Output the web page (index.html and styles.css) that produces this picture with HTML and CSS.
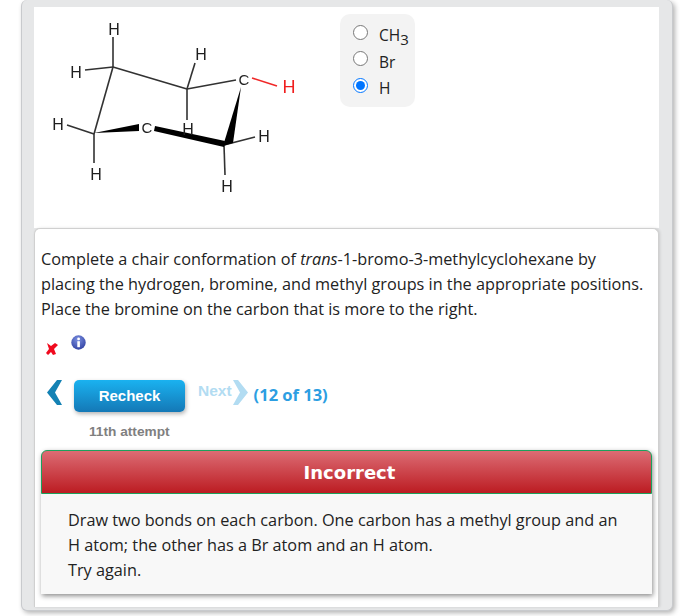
FILE: index.html
```html
<!DOCTYPE html>
<html>
  <head>
    <meta charset="UTF-8">
    <title>Chair conformation</title>
    <link rel="stylesheet" href="styles.css">
  </head>
  <body>
    <div class="frame">
      <div class="stage">
        <svg class="molecule" width="306" height="221" viewBox="34 7 306 221">
          <g class="bonds">
            <line x1="113" y1="67" x2="113" y2="37"/>
            <line x1="113" y1="67" x2="85" y2="70"/>
            <line x1="113" y1="67" x2="94" y2="134"/>
            <line x1="113" y1="67" x2="187" y2="89"/>
            <line x1="187" y1="89" x2="195" y2="63"/>
            <line x1="187" y1="89" x2="236" y2="80"/>
            <line x1="187" y1="89" x2="187" y2="120"/>
            <line x1="224" y1="145" x2="255" y2="137"/>
            <line x1="224" y1="145" x2="225" y2="175"/>
            <line x1="94" y1="134" x2="67" y2="125"/>
            <line x1="94" y1="134" x2="94" y2="163"/>
            <line class="red" x1="252" y1="78" x2="277" y2="86"/>
          </g>
          <polygon points="241,87 233,143 223,146"/>
          <polygon points="155,126 225,141 224,147 154,131"/>
          <polygon points="94,133 139,124 139,131"/>
          <g class="atoms">
            <text x="114" y="35">H</text>
            <text x="76" y="78">H</text>
            <text x="201" y="60">H</text>
            <text class="small" x="244" y="85">C</text>
            <text class="red" x="289" y="93">H</text>
            <text x="58" y="130">H</text>
            <text class="small" x="147" y="133">C</text>
            <text x="188" y="135">H</text>
            <text x="264" y="142">H</text>
            <text x="96" y="180">H</text>
            <text x="227" y="192">H</text>
          </g>
        </svg>
        <form class="choices">
          <label class="choice"><input type="radio" name="group"><span>CH<sub>3</sub></span></label>
          <label class="choice"><input type="radio" name="group"><span>Br</span></label>
          <label class="choice"><input type="radio" name="group" checked><span>H</span></label>
        </form>
      </div>
      <div class="card">
        <p class="question">Complete a chair conformation of <em>trans</em>-1-bromo-3-methylcyclohexane by placing the hydrogen, bromine, and methyl groups in the appropriate positions. Place the bromine on the carbon that is more to the right.</p>
        <div class="marks">
          <svg class="cross" width="14" height="14" viewBox="0 0 14 14"><path d="M2 1 L6 4 L10 1 L13 3 L9 7 L11 12 L8 13 L6 10 L3 13 L1 11 L4 7 Z"/></svg>
          <svg class="info" width="15" height="15" viewBox="0 0 15 15">
            <defs>
              <radialGradient id="ball" cx="0.45" cy="0.3" r="0.8">
                <stop offset="0" stop-color="#7a8fe0"/>
                <stop offset="1" stop-color="#2a3a9c"/>
              </radialGradient>
            </defs>
            <circle cx="7.5" cy="7.5" r="7.2" fill="url(#ball)"/>
            <rect x="6.3" y="6.2" width="2.6" height="6" fill="#fff"/>
            <circle cx="7.6" cy="3.9" r="1.4" fill="#fff"/>
          </svg>
        </div>
        <div class="controls">
          <svg class="prev" width="15" height="25" viewBox="0 0 15 25"><path d="M10 0 H15 L8 12.5 L15 25 H10 L0 12.5 Z"/></svg>
          <button type="button" class="recheck">Recheck</button>
          <span class="next">Next</span>
          <svg class="next-arrow" width="15" height="25" viewBox="0 0 15 25"><path d="M5 0 H0 L7 12.5 L0 25 H5 L15 12.5 Z"/></svg>
          <span class="count">(12 of 13)</span>
        </div>
        <div class="attempt">11th attempt</div>
        <div class="feedback">
          <div class="feedback-head">Incorrect</div>
          <div class="feedback-body">
            Draw two bonds on each carbon. One carbon has a methyl group and an<br>
            H atom; the other has a Br atom and an H atom.<br>
            Try again.
          </div>
        </div>
      </div>
    </div>
  </body>
</html>
```

FILE: styles.css
```css
* {
  box-sizing: border-box;
}
html {
  background-color: white;
}
body {
  min-height: 616px;
  margin: 0;
  font-family: "Open Sans", sans-serif;
  color: rgb(34, 34, 34);
}
.frame {
  width: 652px;
  height: 611px;
  margin-left: 21px;
  padding: 7px 13px 3px 12px;
  background-color: rgb(230, 231, 232);
  border: 1px solid rgb(200, 202, 205);
  border-top: 0;
  border-radius: 6px;
  box-shadow: 2px 2px 5px rgba(0, 0, 0, 0.3);
}
.stage {
  display: flex;
  align-items: flex-start;
  height: 221px;
  background-color: white;
}
.molecule {
  flex: none;
  filter: blur(0.4px);
}
.bonds line {
  stroke: rgb(50, 50, 50);
  stroke-width: 1.6;
}
.bonds line.red {
  stroke: rgb(240, 40, 40);
}
.atoms text {
  font-family: "Liberation Sans", sans-serif;
  font-size: 16px;
  text-anchor: middle;
  fill: rgb(30, 30, 30);
}
.atoms text.small {
  font-size: 15px;
}
.atoms text.red {
  font-size: 18px;
  fill: rgb(240, 30, 30);
}
.choices {
  width: 75px;
  height: 93px;
  margin: 7px 0 0 0;
  padding: 8px 0 0 13px;
  background-color: rgb(243, 243, 243);
  border-radius: 10px;
}
.choice {
  display: flex;
  align-items: center;
  height: 26.5px;
  font-size: 15.5px;
  line-height: 20px;
}
.choice input {
  width: 15px;
  height: 15px;
  margin: 0 11px 0 0;
  position: relative;
  top: -3px;
}
.choice sub {
  font-size: 15px;
  line-height: 0;
}
.card {
  height: 379px;
  padding: 18px 7px 0 6px;
  background-color: white;
  border: 1px solid rgb(208, 208, 208);
  border-bottom: 0;
  border-radius: 6px 6px 0 0;
  box-shadow: 1px 0 3px rgba(0, 0, 0, 0.12);
}
.question {
  margin: 0;
  font-size: 16.25px;
  line-height: 25px;
}
.marks {
  display: flex;
  align-items: flex-start;
  gap: 12px;
  height: 30px;
  margin-top: 13px;
  padding-left: 4px;
}
.cross {
  margin-top: 7px;
  fill: rgb(240, 10, 30);
}
.controls {
  display: flex;
  align-items: flex-start;
  height: 33px;
  margin-top: 15px;
  padding-left: 6px;
}
.prev {
  flex: none;
  margin: 0 12px 0 0;
  fill: rgb(20, 130, 180);
}
.recheck {
  width: 111px;
  height: 32px;
  margin: 0 13px 0 0;
  padding: 0 0 1px 0;
  font-family: "Liberation Sans", sans-serif;
  font-size: 15px;
  font-weight: bold;
  color: white;
  background: linear-gradient(rgb(26, 178, 240), rgb(20, 120, 182));
  border: 0;
  border-radius: 5px;
  box-shadow: 1px 2px 4px rgba(0, 0, 0, 0.3);
}
.next {
  font-family: "Liberation Sans", sans-serif;
  font-size: 15.5px;
  font-weight: bold;
  line-height: 22px;
  color: rgb(178, 220, 242);
}
.next-arrow {
  flex: none;
  margin-left: 1px;
  fill: rgb(178, 220, 242);
}
.count {
  margin: 3px 0 0 6px;
  font-size: 16.5px;
  font-weight: bold;
  color: rgb(44, 158, 226);
}
.attempt {
  margin: 10px 0 0 48px;
  font-family: "Liberation Sans", sans-serif;
  font-size: 13.7px;
  font-weight: bold;
  line-height: 18px;
  color: rgb(128, 128, 128);
}
.feedback {
  width: 611px;
  height: 144px;
  margin-top: 9px;
  background-color: rgb(248, 248, 248);
  border-radius: 6px 6px 0 0;
  box-shadow: 1px 2px 5px rgba(0, 0, 0, 0.45);
}
.feedback-head {
  height: 44px;
  padding-left: 6px;
  font-family: "DejaVu Sans", sans-serif;
  font-size: 18px;
  font-weight: bold;
  line-height: 44px;
  text-align: center;
  color: white;
  background: linear-gradient(rgb(220, 108, 116), rgb(188, 28, 34));
  border: 1px solid rgb(28, 160, 92);
  border-radius: 6px 6px 0 0;
}
.feedback-body {
  padding: 14px 27px 0 27px;
  font-size: 16.25px;
  line-height: 25px;
}
```
